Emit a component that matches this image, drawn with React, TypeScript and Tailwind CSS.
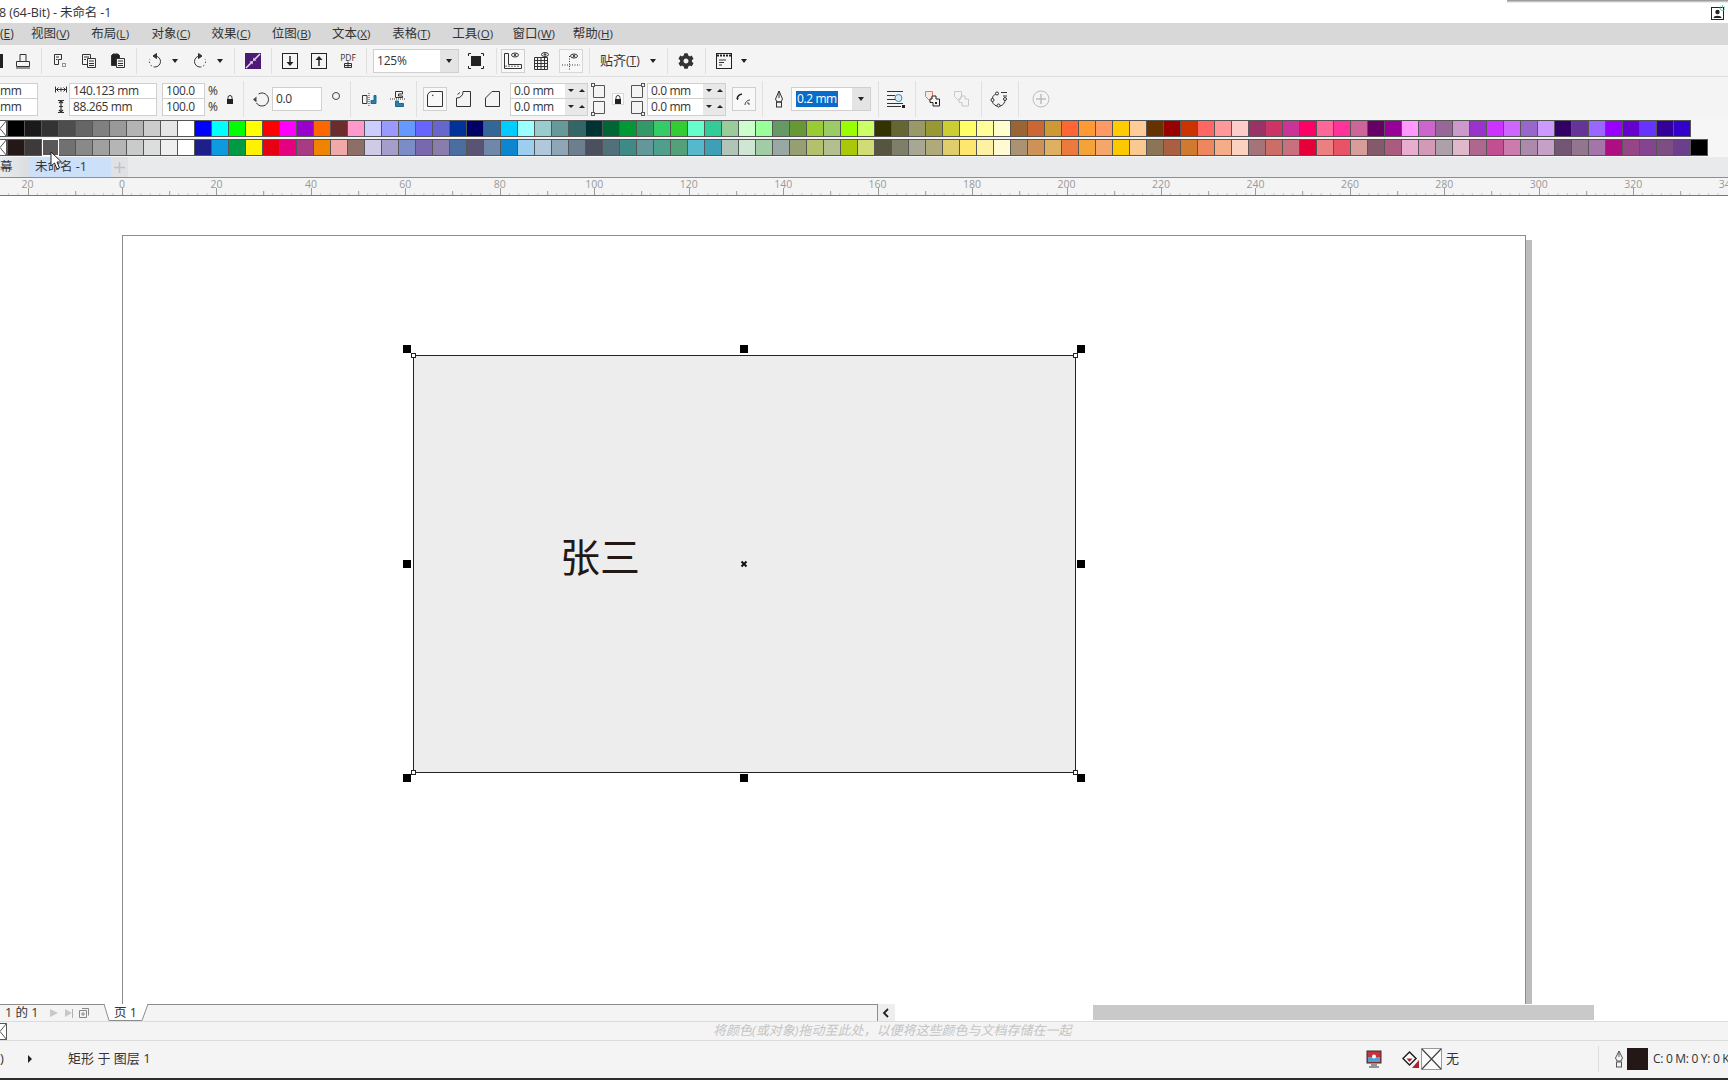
import React from 'react';
import { FaCog } from 'react-icons/fa';

const paletteTop = [
  '#000000','#1a1a1a','#333333','#4d4d4d','#666666','#808080','#999999','#b3b3b3','#cccccc','#e6e6e6','#ffffff',
  '#0000ff','#00ffff','#00ff00','#ffff00','#ff0000','#ff00ff','#9900cc','#ff6600','#6e2b2b','#ff99cc','#ccccff',
  '#9999ff','#6699ff','#6666ff','#6666cc','#003399','#000066','#336699','#00ccff','#99ffff','#99cccc','#669999',
  '#336666','#003333','#006633','#009933','#339966','#33cc66','#33cc33','#66ffcc','#33cc99','#99cc99','#ccffcc',
  '#99ff99','#669966','#669933','#99cc33','#99cc66','#99ff00','#ccff66','#333300','#666633','#999966','#999933',
  '#cccc33','#ffff66','#ffff99','#ffffcc','#996633','#cc6633','#cc9933','#ff6633','#ff9933','#ff9966','#ffcc00',
  '#ffcc99','#663300','#990000','#cc3300','#ff6666','#ff9999','#ffcccc','#993366','#cc3366','#cc3399','#ff0066',
  '#ff6699','#ff3399','#cc6699','#660066','#990099','#ff99ff','#cc66cc','#996699','#cc99cc','#9933cc','#cc33ff',
  '#cc66ff','#9966cc','#cc99ff','#330066','#663399','#9966ff','#9900ff','#6600cc','#6633ff','#330099','#3300cc',
];

const paletteBottom = [
  '#231815','#3e3a39','#595757','#727171','#898989','#9fa0a0','#b5b5b6','#c9caca','#dcdddd','#efefef','#ffffff',
  '#1d2088','#0f9ae0','#009944','#fff100','#e60012','#e4007f','#a83c84','#f08300','#f0a8a8','#8c6f66','#cfcbe6',
  '#a59ecb','#7a8dc6','#7a68ae','#8a7dac','#4c6d9f','#5a5474','#6f87a8','#0c86cf','#9ccfef','#b0c8dc','#8fa6b6',
  '#6d7e8e','#4b5060','#52707a','#3f8986','#64979a','#4ea08c','#54a078','#56b8cc','#3f9fb6','#b0c4b8','#cfe6d4',
  '#a2cca6','#98a8a2','#969f72','#b3c16c','#b2bf8f','#a9c80a','#d2dc75','#57553f','#7f7f69','#a8a793','#b0a978',
  '#dfce6b','#fde76f','#fdf2a4','#fffad2','#ab9272','#cc9258','#deb062','#ec7a3c','#f4a23a','#f5a76b','#fcc800',
  '#f9c98f','#8a7657','#ab5f42','#cf7a2f','#ee875e','#f4ad88','#fbd2c0','#a5737a','#cc6d66','#c8707d','#e60039',
  '#ec8080','#e85366','#d69d9b','#84596a','#a95c7f','#e9add0','#d39ab7','#aea0a8','#dfb9c9','#ae6890','#c14f92',
  '#cb7cad','#ad8aac','#c6a0c6','#725673','#947590','#a574a9','#ad0f83','#964586','#84448f','#7d4d84','#6b3f8c','#000000',
];

const menus = [
  ['视图', 'V'], ['布局', 'L'], ['对象', 'C'], ['效果', 'C'], ['位图', 'B'],
  ['文本', 'X'], ['表格', 'T'], ['工具', 'O'], ['窗口', 'W'], ['帮助', 'H'],
];

const rulerLabels = [0, 20, 0, 20, 40, 60, 80, 100, 120, 140, 160, 180, 200, 220, 240, 260, 280, 300, 320, 340];
const minorTicks = [9.4, 18.9, 28.3, 37.8, 56.7, 66.1, 75.6, 85];

const handles = [
  'left-[-11px] top-[-11px]', 'left-[326px] top-[-11px]', 'left-[663px] top-[-11px]',
  'left-[-11px] top-[204px]', 'left-[663px] top-[204px]',
  'left-[-11px] top-[418px]', 'left-[326px] top-[418px]', 'left-[663px] top-[418px]',
];

const corners = ['left-[-3px] top-[-3px]', 'left-[659px] top-[-3px]', 'left-[-3px] top-[414px]', 'left-[659px] top-[414px]'];

function Ico({ className = '', w = 16, h = 16, children }: { className?: string; w?: number; h?: number; children: React.ReactNode }) {
  return (
    <svg width={w} height={h} viewBox={`0 0 ${w} ${h}`} fill="none" stroke="#333" strokeWidth="1" className={`flex-none ${className}`}>
      {children}
    </svg>
  );
}

function Drop({ className = '' }: { className?: string }) {
  return <div className={`flex-none w-0 h-0 border-x-[3.5px] border-x-transparent border-t-[4px] border-t-[#222] ${className}`} />;
}

function Sep({ className = '' }: { className?: string }) {
  return <div className={`flex-none w-px h-[26px] bg-[#e0e0e0] ${className}`} />;
}

function Sep2({ className = '' }: { className?: string }) {
  return <div className={`flex-none w-px h-[36px] bg-[#e0e0e0] ${className}`} />;
}

function Stack({ a, b, className = '' }: { a: string; b: string; className?: string }) {
  return (
    <div className={`flex-none flex flex-col h-[33px] bg-white border border-[#d0d0d0] divide-y divide-[#d0d0d0] ${className}`}>
      <div className="h-1/2 flex items-center pl-[3px] whitespace-nowrap">{a}</div>
      <div className="h-1/2 flex items-center pl-[3px] whitespace-nowrap">{b}</div>
    </div>
  );
}

function Stepper({ className = '', w }: { className?: string; w: string }) {
  const row = (
    <div className="h-1/2 flex">
      <div className={`${w} bg-white flex items-center pl-[3px] whitespace-nowrap`}>0.0 mm</div>
      <div className="flex-1 bg-[#e8e8e8] flex items-center justify-center gap-[5px]">
        <div className="w-0 h-0 border-x-[3px] border-x-transparent border-t-[3px] border-t-[#222]" />
        <div className="w-0 h-0 border-x-[3px] border-x-transparent border-b-[3px] border-b-[#222]" />
      </div>
    </div>
  );
  return (
    <div className={`flex-none flex flex-col h-[33px] border border-[#d0d0d0] divide-y divide-[#d0d0d0] ${className}`}>
      {row}
      {row}
    </div>
  );
}

function Eye({ x = 11, y = 3 }: { x?: number; y?: number }) {
  return (
    <g>
      <ellipse cx={x} cy={y} rx="3.5" ry="2" />
      <circle cx={x} cy={y} r="0.8" fill="#333" />
    </g>
  );
}

function Swatch({ color, active }: { color: string; active?: boolean }) {
  return (
    <div
      className={active ? 'flex-none w-[17px] h-full border border-white' : 'flex-none w-[17px] h-full border-y border-r border-[#555]'}
      style={{ backgroundColor: color }}
    />
  );
}

function NoColor({ className = '' }: { className?: string }) {
  return (
    <svg width="7" height="17" viewBox="0 0 7 17" fill="#fff" stroke="#555" strokeWidth="1" className={`flex-none ${className}`}>
      <path d="M-1 .5H6.5V16.5H-1z" />
      <path d="M6.5.5 0 8.5 6.500 16.500" fill="none" />
    </svg>
  );
}

export default function App() {
  return (
    <div className="relative w-[1728px] h-[1080px] flex flex-col overflow-hidden bg-white text-[#333] font-['Open_Sans','Noto_Sans_CJK_SC',sans-serif]">
      {/* Title bar */}
      <div className="relative flex-none h-[23px] flex items-center justify-between bg-white text-[12.5px]">
        <span className="-ml-px mt-[3px] tracking-[-0.1px] whitespace-nowrap">8 (64-Bit) - 未命名 -1</span>
        <div className="absolute top-0 right-0 w-[221px] h-[3px] bg-gradient-to-b from-[#8a8a8a] to-white" />
        <svg width="14" height="15" viewBox="0 0 14 15" fill="none" className="mr-[3px] mt-[1px] flex-none">
          <rect x=".5" y="2.500" width="12" height="12" fill="#fff" stroke="#222" />
          <circle cx="6.500" cy="7" r="2.200" fill="#222" />
          <path d="M2.500 13c0-3 8-3 8 0z" fill="#222" />
          <path d="M11.500 0v3M9.500 1.500a2.500 2.500 0 1 0 4 0" stroke="#4fb58f" strokeWidth=".8" />
        </svg>
      </div>

      {/* Menu */}
      <div className="flex-none h-[22px] flex items-center bg-[#d8d8d8] text-[12.5px] whitespace-nowrap">
        <span className="flex-none w-[31px] text-[12px]">
          (<span className="underline">E</span>)
        </span>
        {menus.map(([label, key]) => (
          <span key={label} className="flex-none w-[60.200px]">
            {label}
            <span className="text-[11.500px]">
              (<span className="underline">{key}</span>)
            </span>
          </span>
        ))}
      </div>

      {/* Standard toolbar */}
      <div className="flex-none h-[32px] flex items-center bg-[#f4f4f4] border-b border-[#dedede]">
        <div className="flex-none w-[3px] h-[14px] bg-[#222]" />
        <Ico className="ml-[12px]">
          <path d="M5 1.500h6v7H5zM1.500 8.500h13v5h-13zM1 15h14" />
        </Ico>
        <Sep className="ml-[10px]" />
        <Ico className="ml-[10px]">
          <path d="M2.500 1.500h7v5h-3v5h-4zM4 4h3M4 6.500h1.500" />
          <path d="M10.500 10.500h3v3h-3z" strokeDasharray="1 1" />
        </Ico>
        <Ico className="ml-[13px]">
          <path d="M1.500 1.500h8v10h-8zM3 4h5M3 6.500h2" />
          <path d="M6.500 5.500h8v9h-8z" fill="#f4f4f4" />
          <path d="M8 8h5M8 10.500h5M8 12.500h5" />
        </Ico>
        <Ico className="ml-[13px]">
          <path d="M1.500 2.500 3 1h5l1.500 1.500v10h-8z" fill="#222" />
          <path d="M6.500 5.500h8v9h-8z" fill="#f4f4f4" />
          <path d="M8 8h5M8 10.500h5M8 12.500h5" />
        </Ico>
        <Sep className="ml-[10px]" />
        <Ico className="ml-[10px]">
          <path d="M8 3a5.500 5.500 0 0 1 0 11" />
          <path d="M8 14a5.500 5.500 0 0 1-5-8" strokeDasharray="1.500 2" />
          <path d="M9.500.5 6 3l3.500 2.500z" fill="#333" />
        </Ico>
        <Drop className="ml-[9px]" />
        <Ico className="ml-[14px]">
          <path d="M8 3a5.500 5.500 0 0 0 0 11" />
          <path d="M8 14a5.500 5.500 0 0 0 5-8" strokeDasharray="1.500 2" />
          <path d="M6.500.5 10 3 6.500 5.500z" fill="#333" />
        </Ico>
        <Drop className="ml-[9px]" />
        <Sep className="ml-[11px]" />
        <Ico className="ml-[10px]">
          <rect width="16" height="16" fill="#4a1a74" stroke="none" />
          <path d="M1 15 6 10M15 1 10 6" stroke="#eed8f4" strokeWidth="1.500" />
          <path d="M8 8 4.500 8.500 7.500 11.500zM8 8l3.500-.5L8.500 4.500z" fill="#eed8f4" stroke="none" />
        </Ico>
        <Sep className="ml-[10px]" />
        <Ico className="ml-[10px]">
          <rect x=".5" y=".5" width="15" height="15" stroke="#222" />
          <path d="M8 3v8" stroke="#222" strokeWidth="1.500" />
          <path d="M4.500 9h7L8 13z" fill="#222" stroke="none" />
        </Ico>
        <Ico className="ml-[13px]">
          <rect x=".5" y=".5" width="15" height="15" stroke="#222" />
          <path d="M8 13V5" stroke="#222" strokeWidth="1.500" />
          <path d="M4.500 7h7L8 3z" fill="#222" stroke="none" />
        </Ico>
        <div className="flex-none ml-[13px] w-[16px] flex flex-col items-center text-[8.500px] leading-[9px]">
          <span>PDF</span>
          <Ico w={8} h={7} className="mt-[-1px]">
            <path d="M.5 2.500h7v4h-7zM4 .5v6M.5 4.500h7" />
          </Ico>
        </div>
        <Sep className="ml-[10px]" />
        <div className="flex-none ml-[6px] w-[86px] h-[24px] flex bg-white border border-[#d0d0d0] text-[12px] tracking-[-0.2px]">
          <div className="flex-1 flex items-center pl-[3px]">125%</div>
          <div className="w-[18px] bg-[#e4e4e4] flex items-center justify-center">
            <Drop />
          </div>
        </div>
        <Ico className="ml-[9px]">
          <rect x="3" y="3" width="10" height="10" fill="#222" stroke="none" />
          <path d="M.5 3V.5H3M13 .5h2.500V3M15.500 13v2.500H13M3 15.500H.5V13" stroke="#222" />
        </Ico>
        <Sep className="ml-[12px]" />
        <div className="flex-none ml-[4px] w-[24px] h-[24px] flex items-center justify-center border border-[#cfcfcf] bg-[#f8f8f8]">
          <Ico w={20} h={18}>
            <path d="M1.500 1.500h4v11h13v4h-17z" />
            <path d="M3 15v-1.500M6 15v-1.500M9 15v-1.500M12 15v-1.500M15 15v-1.500" />
            <Eye x={12} y={3} />
          </Ico>
        </div>
        <Ico w={16} h={18} className="ml-[9px]">
          <path d="M.5 5.500h13v12H.5zM.5 8.500h13M.5 11.500h13M.5 14.500h13M3.500 5.500v12M7 5.500v12M10.500 5.500v12" />
          <Eye x={11} y={2.500} />
        </Ico>
        <div className="flex-none ml-[9px] w-[24px] h-[24px] flex items-center justify-center border border-[#d8d8d8] bg-[#f8f8f8]">
          <Ico w={20} h={18}>
            <path d="M1 13h18M8.500 4v14" strokeDasharray="1 1.500" />
            <Eye x={13} y={4} />
          </Ico>
        </div>
        <Sep className="ml-[6px]" />
        <span className="flex-none ml-[10px] w-[40px] text-[13px] whitespace-nowrap">
          贴齐<span className="text-[12px]">(<span className="underline">T</span>)</span>
        </span>
        <Drop className="ml-[10px]" />
        <Sep className="ml-[11px]" />
        <FaCog size={16} color="#333" className="flex-none ml-[10px] mr-px" />
        <Sep className="ml-[10px]" />
        <Ico className="ml-[10px]">
          <rect x=".5" y=".5" width="15" height="15" stroke="#222" />
          <path d="M1 2.500h14" stroke="#222" strokeWidth="2" strokeDasharray="2 1" />
          <path d="M3 7h7M3 9.500h5M3 12h3" />
        </Ico>
        <Drop className="ml-[9px]" />
      </div>

      {/* Property bar */}
      <div className="flex-none h-[42px] flex items-center pt-[2px] bg-[#f4f4f4] text-[12px] tracking-[-0.4px]">
        <div className="flex-none flex flex-col w-[38px] h-[33px] bg-white border-y border-r border-[#d0d0d0] divide-y divide-[#d0d0d0]">
          <div className="h-1/2 flex items-center">mm</div>
          <div className="h-1/2 flex items-center">mm</div>
        </div>
        <div className="flex-none ml-[17px] w-[12px] h-[33px] flex flex-col justify-around">
          <Ico w={12} h={9}>
            <path d="M.5 1.500v6M11.500 1.500v6M1 4.500h10M3.500 2.500 1.500 4.500l2 2M8.500 2.500l2 2-2 2M6 2.500v4" />
          </Ico>
          <Ico w={12} h={13}>
            <path d="M3 .5h6M3 12.500h6M6 1v11M4 3l2-2 2 2M4 10l2 2 2-2M4 6.500h4" strokeWidth="1.200" />
          </Ico>
        </div>
        <Stack a="140.123 mm" b="88.265 mm" className="ml-[2px] w-[88px]" />
        <Stack a="100.0" b="100.0" className="ml-[5px] w-[43px]" />
        <div className="flex-none ml-[3px] w-[8px] h-[33px] flex flex-col justify-around leading-none">
          <span>%</span>
          <span>%</span>
        </div>
        <Ico w={8} h={9} className="ml-[10px]">
          <path d="M2 4V2.500a2 2 0 0 1 4 0V4" />
          <rect x="1" y="4" width="6" height="5" fill="#222" stroke="none" />
        </Ico>
        <Sep2 className="ml-[9px]" />
        <Ico w={17} h={17} className="ml-[9px]">
          <path d="M9 2a6.500 6.500 0 1 1-5.500 10" />
          <path d="M9 2a6.500 6.500 0 0 0-3.500 1" />
          <path d="M0 8.500 3.500 5.500v6z" fill="#444" stroke="none" />
        </Ico>
        <div className="flex-none ml-[2px] w-[50px] h-[24px] flex items-center pl-[3px] bg-white border border-[#d0d0d0]">0.0</div>
        <div className="flex-none ml-[10px] mb-[6px] w-[8px] h-[8px] rounded-full border border-[#444]" />
        <Sep2 className="ml-[10px]" />
        <Ico className="ml-[10px]">
          <path d="M1.500 4.500h4.500v8H1.500z" />
          <path d="M8 2v13" strokeDasharray="1 1" />
          <path d="M10 12.500h5v-8h-2v5h-3z" fill="#2b7fa8" stroke="#1d6a90" />
        </Ico>
        <Ico className="ml-[13px]">
          <path d="M5.500 .5h7v2.500h-4v2h4v1.500h-7z" />
          <path d="M0 8h16" strokeDasharray="1 1" />
          <path d="M5.500 10h3v2.500h5v3h-8z" fill="#2b7fa8" stroke="#1d6a90" />
        </Ico>
        <Sep2 className="ml-[10px]" />
        <div className="flex-none ml-[6px] w-[24px] h-[24px] flex items-center justify-center border border-[#d0d0d0] bg-[#f8f8f8]">
          <Ico w={18} h={18}>
            <path d="M6 1.500h10.500v15h-15V6a4.500 4.500 0 0 1 4.500-4.500z" />
            <path d="M6.500 6 7 4.800" strokeWidth="1.200" />
          </Ico>
        </div>
        <Ico w={16} h={18} className="ml-[9px]">
          <path d="M7 1.500h7.500v15H.5V8A6 6 0 0 0 7 1.500z" />
          <path d="M1.500 4.500 4 2.500" />
        </Ico>
        <Ico w={16} h={18} className="ml-[13px]">
          <path d="M7 1.500h7.500v15H.5V8z" />
        </Ico>
        <Stepper className="ml-[9px] w-[78px]" w="w-[54px]" />
        <div className="flex-none ml-[3px] w-[14px] h-[33px] flex flex-col justify-between">
          <Ico w={14} h={15}>
            <path d="M2.500 2.500h11v12h-11z" stroke="#555" />
            <rect x=".5" y=".5" width="3" height="3" fill="#f4f4f4" stroke="#555" />
          </Ico>
          <Ico w={14} h={15}>
            <path d="M2.500 .5h11v12h-11z" stroke="#555" />
            <rect x=".5" y="11.500" width="3" height="3" fill="#f4f4f4" stroke="#555" />
          </Ico>
        </div>
        <div className="flex-none ml-[7px] w-[12px] h-[12px] flex items-center justify-center bg-white border border-[#d8d8d8]">
          <Ico w={8} h={9}>
            <path d="M2 4V2.500a2 2 0 0 1 4 0V4" />
            <rect x="1" y="4" width="6" height="5" fill="#222" stroke="none" />
          </Ico>
        </div>
        <div className="flex-none ml-[7px] w-[14px] h-[33px] flex flex-col justify-between">
          <Ico w={14} h={15}>
            <path d="M.5 2.500h11v12H.5z" stroke="#555" />
            <rect x="10.500" y=".5" width="3" height="3" fill="#f4f4f4" stroke="#555" />
          </Ico>
          <Ico w={14} h={15}>
            <path d="M.5 .5h11v12H.5z" stroke="#555" />
            <rect x="10.500" y="11.500" width="3" height="3" fill="#f4f4f4" stroke="#555" />
          </Ico>
        </div>
        <Stepper className="ml-[2px] w-[79px]" w="w-[55px]" />
        <div className="flex-none ml-[6px] w-[24px] h-[24px] flex items-center justify-center border border-[#d0d0d0] bg-[#f8f8f8]">
          <Ico w={18} h={18}>
            <path d="M2 9a6 6 0 0 1 5-5" stroke="#222" strokeWidth="1.500" />
            <path d="M3.500 8.500 2 10" stroke="#222" />
            <path d="M10 15a5 5 0 0 1 5-5" stroke="#444" />
            <path d="M14 15v-2h-2" stroke="#444" />
          </Ico>
        </div>
        <Sep2 className="ml-[6px]" />
        <Ico w={14} h={18} className="ml-[9px]">
          <path d="M7 1 10.500 9 9 12H5L3.500 9z" />
          <path d="M7 1v7" />
          <rect x="4.500" y="12" width="5" height="5" />
        </Ico>
        <div className="flex-none ml-[5px] w-[80px] h-[24px] flex bg-white border border-[#d0d0d0]">
          <div className="flex-1 flex items-center pl-[4px]">
            <span className="px-px leading-[16px] text-white bg-[#0a6cc8] whitespace-nowrap">0.2 mm</span>
          </div>
          <div className="w-[18px] bg-[#e4e4e4] flex items-center justify-center">
            <Drop />
          </div>
        </div>
        <Sep2 className="ml-[7px]" />
        <Ico w={20} h={20} className="ml-[7px]">
          <path d="M1 2.500h16M1 6.500h8M1 10.500h8M1 14.500h16M1 17.500h14" />
          <circle cx="12.500" cy="9" r="3.500" fill="#d8ecf8" stroke="#3a8fc0" />
          <path d="M16 19v-3l3 0v3z" fill="#222" stroke="none" />
        </Ico>
        <Sep2 className="ml-[9px]" />
        <Ico w={18} h={18} className="ml-[8px]">
          <path d="M1.500 1.500h7v5l-3 4-4-4z" stroke="#e07a5f" fill="#fbe9e4" />
          <path d="M8 6h4v3h3.500v7H9v-3.500H6V9h2z" fill="#f4f4f4" stroke="#222" />
          <rect x="11" y="12" width="2" height="2" fill="#222" stroke="none" />
        </Ico>
        <Ico w={18} h={18} className="ml-[11px]">
          <path d="M1.500 1.500h7v5l-3 4-4-4z" stroke="#c8c8c8" />
          <path d="M8 6h4v3h3.500v7H9v-3.500H6V9h2z" stroke="#c8c8c8" />
        </Ico>
        <Sep2 className="ml-[10px]" />
        <Ico w={18} h={18} className="ml-[8px]">
          <path d="M7 3.500A6.500 6.500 0 1 0 15 9" />
          <path d="M11 2.500h6M13 6h4" />
          <circle cx="7" cy="3.500" r="1.500" fill="#f4f4f4" />
          <circle cx="2.500" cy="10" r="1.500" fill="#f4f4f4" />
          <circle cx="8.500" cy="15.500" r="1.500" fill="#f4f4f4" />
          <circle cx="15" cy="9" r="1.500" fill="#f4f4f4" />
        </Ico>
        <Sep2 className="ml-[10px]" />
        <Ico w={18} h={18} className="ml-[13px]">
          <circle cx="9" cy="9" r="8" stroke="#bdbdbd" />
          <path d="M9 4v10M4 9h10" stroke="#bdbdbd" strokeWidth="1.500" />
        </Ico>
      </div>

      {/* Colour palette */}
      <div className="flex-none h-[38px] flex flex-col pt-px gap-[2px] bg-[#f6f6f6]">
        <div className="h-[17px] flex">
          <NoColor />
          <div className="flex h-full border-l border-[#555]">
            {paletteTop.map((c, i) => (
              <Swatch key={i} color={c} />
            ))}
          </div>
        </div>
        <div className="h-[17px] flex">
          <NoColor />
          <div className="flex h-full border-l border-[#555]">
            {paletteBottom.map((c, i) => (
              <Swatch key={i} color={c} active={i === 2} />
            ))}
          </div>
        </div>
      </div>

      {/* Document tabs */}
      <div className="flex-none h-[21px] flex bg-[#e8eaec] border-b border-[#3fa9d5] text-[12.500px]">
        <div className="w-[30px] flex items-center pt-px bg-gradient-to-r from-[#e8eaec] to-[#dcdde0]">幕</div>
        <div className="w-[81px] flex items-center pl-[5px] pt-px bg-[#cde0fa] whitespace-nowrap">未命名 -1</div>
        <div className="w-[17px] flex items-center justify-center bg-[#dfe1e4]">
          <Ico w={11} h={11}>
            <path d="M5.500 0v11M0 5.500h11" stroke="#c2c2c2" strokeWidth="1.500" />
          </Ico>
        </div>
      </div>

      {/* Ruler */}
      <div className="flex-none h-[18px] flex bg-[#f4f4f4] border-b border-[#777] overflow-hidden">
        <div className="flex-none ml-[-66.920px] flex">
          {rulerLabels.map((n, i) => (
            <div key={i} className="relative flex-none w-[94.460px] h-full flex items-end">
              {i > 0 && (
                <span className="absolute left-0 top-0 -translate-x-1/2 text-[10.500px] leading-[13px] text-[#999]">{n}</span>
              )}
              <svg width="94.460" height="7" viewBox="0 0 94.460 7" className="flex-none">
                <path d="M.5 0v7M47.700 3v4" stroke="#999" />
                {minorTicks.map(t => (
                  <path key={t} d={`M${t} 5v2`} stroke="#ccc" />
                ))}
              </svg>
            </div>
          ))}
        </div>
      </div>

      {/* Canvas */}
      <div className="flex-1 min-h-0 flex pl-[122px] pt-[39px] bg-white overflow-hidden">
        <div className="flex-none w-[1404px] border-x border-t border-[#8c8c8c] bg-white">
          <div className="relative ml-[290px] mt-[119px] w-[663px] h-[418px] bg-[#ededed] border border-[#222]">
            <div className="pl-[146px] pt-[179px] text-[40px] leading-[40px] text-[#231815] font-['Noto_Sans_CJK_SC',serif]">张三</div>
            {handles.map(h => (
              <div key={h} className={`absolute w-[8px] h-[8px] bg-black ${h}`} />
            ))}
            {corners.map(c => (
              <div key={c} className={`absolute w-[5px] h-[5px] bg-white border border-[#222] ${c}`} />
            ))}
            <svg width="8" height="8" viewBox="0 0 8 8" className="absolute left-[326px] top-[204px]">
              <path d="M1.500 1.500 6.500 6.500M6.500 1.500 1.500 6.500" stroke="#111" strokeWidth="2" />
            </svg>
          </div>
        </div>
        <div className="flex-none w-[6px] mt-[5px] bg-[#bdbdbd]" />
      </div>

      {/* Page tabs and scrollbar */}
      <div className="flex-none h-[18px] flex border-b border-[#dcdcdc] bg-white text-[12.500px]">
        <div className="flex-none w-[878px] flex items-center bg-[#f4f4f4] border-t border-r border-[#8c8c8c]">
          <span className="flex-none ml-[5px] w-[37px] whitespace-nowrap">1 的 1</span>
          <div className="flex-none ml-[8px] w-0 h-0 border-y-[4.500px] border-y-transparent border-l-[8px] border-l-[#c8c8c8]" />
          <div className="flex-none ml-[7px] w-0 h-0 border-y-[4.500px] border-y-transparent border-l-[7px] border-l-[#c8c8c8]" />
          <div className="flex-none w-px h-[9px] bg-[#b0b0b0]" />
          <Ico w={10} h={10} className="ml-[6px]">
            <path d="M.5 2.500h7v7h-7zM4 4v4M2 6h4M3 .5h6.500v7" stroke="#888" />
          </Ico>
          <div className="relative flex-none ml-[15px] w-[45px] h-[17px] flex items-center pl-[10px] whitespace-nowrap">
            <svg width="45" height="18" viewBox="0 0 45 18" fill="#fff" className="absolute left-0 top-[-1px]">
              <path d="M0 0 5 16.500H38L44 0" stroke="#8c8c8c" />
            </svg>
            <span className="relative">页 1</span>
          </div>
        </div>
        <div className="flex-none w-[17px] flex items-center justify-center bg-[#eeeeee]">
          <Ico w={8} h={10} className="mr-[2px]">
            <path d="M6 1 2 5l4 4" stroke="#222" strokeWidth="1.800" />
          </Ico>
        </div>
        <div className="flex-none ml-[198px] w-[501px] my-px bg-[#c9c9c9]" />
      </div>

      {/* Document palette */}
      <div className="flex-none h-[19px] flex items-center bg-[#f4f4f4] border-b border-[#dcdcdc]">
        <NoColor />
        <span className="flex-none ml-[706px] text-[13px] italic text-[#c4c4c4] whitespace-nowrap">将颜色(或对象)拖动至此处，以便将这些颜色与文档存储在一起</span>
      </div>

      {/* Status bar */}
      <div className="flex-none h-[37px] flex items-center pb-[2px] bg-[#f4f4f4] text-[13px]">
        <span className="flex-none w-[4px] overflow-hidden">)</span>
        <div className="flex-none ml-[24px] w-0 h-0 border-y-[4px] border-y-transparent border-l-[4px] border-l-[#222]" />
        <span className="flex-none ml-[36px] w-[80px] whitespace-nowrap">矩形 于 图层 1</span>
        <Ico w={16} h={18} className="ml-[1218px]">
          <rect x="1" y="1" width="14" height="12" fill="#c8303a" stroke="#333" />
          <rect x="2" y="7" width="12" height="5" fill="#4aa3d0" stroke="none" />
          <circle cx="8" cy="6.500" r="2" fill="#fff" stroke="none" />
          <path d="M5 15h6M3 17h10" stroke="#333" strokeWidth="1.200" />
        </Ico>
        <Ico w={17} h={18} className="ml-[20px]">
          <path d="M1 8.500 7.500 2 14 8.500 7.500 15z" stroke="#222" strokeWidth="1.500" fill="#fff" />
          <path d="M4.500 8.500h6L7.500 12z" fill="#b0202c" stroke="none" />
          <path d="M17 10v8h-7z" fill="#b0202c" stroke="none" />
        </Ico>
        <svg width="21" height="22" viewBox="0 0 21 22" stroke="#444" className="flex-none ml-[2px]">
          <rect x=".5" y=".5" width="20" height="21" fill="#fbfbfb" stroke="#999" />
          <path d="M1 1l19 20M20 1 1 21" strokeWidth="1.200" />
        </svg>
        <span className="flex-none ml-[4px] w-[14px]">无</span>
        <div className="flex-none ml-[138px] w-px h-[26px] bg-[#dedede]" />
        <Ico w={10} h={18} className="ml-[15px]">
          <path d="M5 1 8.500 8 7 11H3L1.500 8zM5 1v6" stroke="#555" />
          <rect x="2.500" y="12" width="5" height="5" stroke="#555" />
        </Ico>
        <div className="flex-none ml-[3px] w-[21px] h-[22px] bg-[#231815]" />
        <span className="flex-none ml-[5px] text-[12px] tracking-[-0.3px] whitespace-nowrap">C: 0 M: 0 Y: 0 K</span>
      </div>

      <div className="flex-none h-[2px] bg-[#2e2e2e]" />

      {/* Mouse pointer */}
      <svg width="13" height="19" viewBox="0 0 13 19" className="absolute left-[50px] top-[151px]">
        <path d="M1 1v14l3.500-3 2.500 6 2.500-1-2.500-6h4.500z" fill="#fff" stroke="#222" strokeWidth="1" />
      </svg>
    </div>
  );
}
